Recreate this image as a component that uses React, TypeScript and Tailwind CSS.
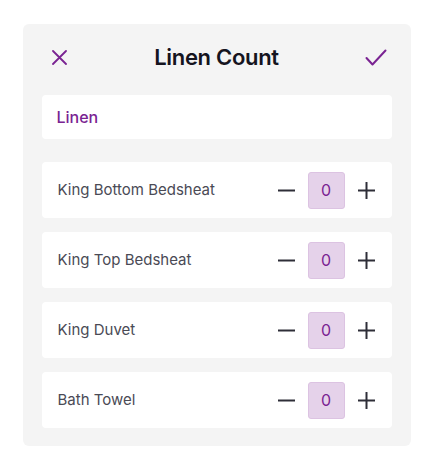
import { useState } from 'react';

const ITEMS = ['King Bottom Bedsheat', 'King Top Bedsheat', 'King Duvet', 'Bath Towel'];

function CountRow({ label }: { label: string }) {
  const [count, setCount] = useState(0);

  return (
    <div className="flex h-[56px] items-center justify-between rounded-[4px] bg-white pl-[16px] pr-[17px]">
      <span className="text-[15px] text-[#4a4a55]">{label}</span>
      <div className="flex items-center gap-[13px]">
        <button
          onClick={() => setCount(c => Math.max(0, c - 1))}
          className="flex h-[17px] w-[17px] items-center justify-center"
          aria-label="Decrease"
        >
          <svg width="17" height="17" viewBox="0 0 17 17">
            <path d="M0.5 8.5h16" stroke="#2e2e38" strokeWidth="2" strokeLinecap="round" />
          </svg>
        </button>
        <div className="flex h-[37px] w-[37px] items-center justify-center rounded-[3px] border border-[#dcc3e2] bg-[#e5d2ea] text-[16px] text-[#7a2392]">
          {count}
        </div>
        <button
          onClick={() => setCount(c => c + 1)}
          className="flex h-[17px] w-[17px] items-center justify-center"
          aria-label="Increase"
        >
          <svg width="17" height="17" viewBox="0 0 17 17">
            <path d="M0.5 8.5h16M8.5 0.5v16" stroke="#2e2e38" strokeWidth="2" strokeLinecap="round" />
          </svg>
        </button>
      </div>
    </div>
  );
}

export default function App() {
  return (
    <div className="min-h-screen bg-white pt-[24px]" style={{ fontFamily: 'Inter, "Noto Sans", sans-serif' }}>
      <div className="mx-auto w-[388px] rounded-[6px] bg-[#f4f4f4] px-[19px] pb-[18px] pt-[13px]">
        {/* Header */}
        <div className="flex h-[40px] items-center justify-between">
          <button className="ml-[10px] flex h-[16px] w-[16px] items-center justify-center" aria-label="Close">
            <svg width="15" height="15" viewBox="0 0 15 15">
              <path d="M1 1l13 13M14 1L1 14" stroke="#7a2392" strokeWidth="1.8" strokeLinecap="round" />
            </svg>
          </button>
          <h1 className="text-[22px] font-semibold tracking-[-0.3px] text-[#15141f]">Linen Count</h1>
          <button className="mr-[4px] flex h-[20px] w-[22px] items-center justify-center" aria-label="Save">
            <svg width="22" height="17" viewBox="0 0 22 17">
              <path d="M1.5 9l6 6.5L20.5 1.5" stroke="#7a2392" strokeWidth="2" fill="none" strokeLinecap="round" strokeLinejoin="round" />
            </svg>
          </button>
        </div>

        {/* Category */}
        <div className="mt-[18px] flex h-[44px] items-center rounded-[4px] bg-white px-[15px]">
          <span className="text-[16px] font-medium text-[#7a2392]">Linen</span>
        </div>

        {/* Items */}
        <div className="mt-[23px] flex flex-col gap-[14px]">
          {ITEMS.map(item => (
            <CountRow key={item} label={item} />
          ))}
        </div>
      </div>
    </div>
  );
}
